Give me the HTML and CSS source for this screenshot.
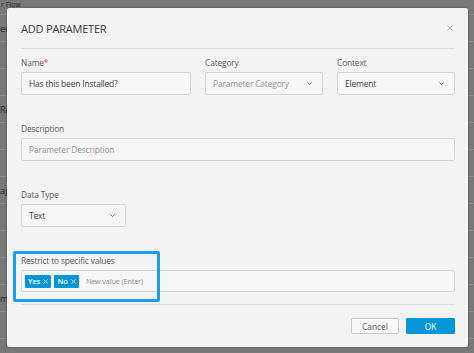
FILE: index.html
```html
<!DOCTYPE html>
<html lang="en">
<head>
<meta charset="utf-8">
<title>Add Parameter</title>
<link rel="stylesheet" href="styles.css">
</head>
<body>
<div class="backdrop">
  <div class="bg-row bg-top"><span>r Flow</span></div>
  <div class="bg-row"><span>ec</span></div>
  <div class="bg-row"></div>
  <div class="bg-row"></div>
  <div class="bg-row"><span>Ri</span></div>
  <div class="bg-row"></div>
  <div class="bg-row"></div>
  <div class="bg-row"><span>ag</span></div>
  <div class="bg-row"></div>
  <div class="bg-row"></div>
  <div class="bg-row"></div>
  <div class="bg-row"><span>m</span></div>
  <div class="bg-row"></div>
</div>

<div class="modal">
  <header class="modal-head">
    <h1 class="modal-title">ADD PARAMETER</h1>
    <span class="close" aria-label="Close">
      <svg width="6" height="6" viewBox="0 0 6 6"><path d="M0.5 0.5 L5.5 5.5 M5.5 0.5 L0.5 5.5" stroke="#b0b0b0" stroke-width="0.9" fill="none"/></svg>
    </span>
  </header>

  <div class="modal-body">
    <div class="row-three">
      <div class="field">
        <div class="label">Name<span class="req">*</span></div>
        <div class="input">Has this been Installed?</div>
      </div>
      <div class="field">
        <div class="label">Category</div>
        <div class="input select"><span class="placeholder">Parameter Category</span>
          <svg class="chev" width="5" height="3" viewBox="0 0 5 3"><path d="M0.4 0.4 L2.5 2.5 L4.6 0.4" stroke="#555" stroke-width="0.9" fill="none"/></svg>
        </div>
      </div>
      <div class="field">
        <div class="label">Context</div>
        <div class="input select"><span>Element</span>
          <svg class="chev" width="5" height="3" viewBox="0 0 5 3"><path d="M0.4 0.4 L2.5 2.5 L4.6 0.4" stroke="#555" stroke-width="0.9" fill="none"/></svg>
        </div>
      </div>
    </div>

    <div class="field">
      <div class="label">Description</div>
      <div class="input"><span class="placeholder">Parameter Description</span></div>
    </div>

    <div class="field">
      <div class="label">Data Type</div>
      <div class="input select narrow"><span>Text</span>
        <svg class="chev" width="5" height="3" viewBox="0 0 5 3"><path d="M0.4 0.4 L2.5 2.5 L4.6 0.4" stroke="#555" stroke-width="0.9" fill="none"/></svg>
      </div>
    </div>

    <div class="field">
      <div class="label">Restrict to specific values</div>
      <div class="input tags">
        <span class="tag">Yes<svg width="5" height="5" viewBox="0 0 5 5"><path d="M0.4 0.4 L4.6 4.6 M4.6 0.4 L0.4 4.6" stroke="#fff" stroke-width="0.8" fill="none"/></svg></span>
        <span class="tag">No<svg width="5" height="5" viewBox="0 0 5 5"><path d="M0.4 0.4 L4.6 4.6 M4.6 0.4 L0.4 4.6" stroke="#fff" stroke-width="0.8" fill="none"/></svg></span>
        <span class="placeholder tag-ph">New value (Enter)</span>
      </div>
    </div>
  </div>

  <footer class="modal-foot">
    <button class="btn btn-cancel">Cancel</button>
    <button class="btn btn-ok">OK</button>
  </footer>
</div>

<div class="highlight"></div>
</body>
</html>
```

FILE: styles.css
```css
* { box-sizing: border-box; }

html, body {
  margin: 0;
  padding: 0;
}

body {
  width: 474px;
  height: 353px;
  overflow: hidden;
  background: #787878;
  font-family: "Open Sans", "Noto Sans", sans-serif;
  position: relative;
}

.bg-row {
  height: 27px;
  border-bottom: 1px solid #8a8a8a;
  display: flex;
  align-items: center;
  font-size: 9px;
  color: #2e2e2e;
}

.bg-top {
  height: 15px;
  align-items: flex-start;
  font-size: 7px;
  line-height: normal;
  padding-left: 1px;
}

.modal {
  position: absolute;
  left: 7px;
  top: 8px;
  width: 461px;
  height: 339px;
  background: #f3f3f3;
  border-radius: 2px;
  box-shadow: 0 0 3px rgba(0, 0, 0, 0.35);
  padding: 0 13px 0 14px;
  display: flex;
  flex-direction: column;
}

.modal-head {
  height: 41px;
  border-bottom: 1px solid #dedede;
  display: flex;
  align-items: center;
  justify-content: space-between;
}

.modal-title {
  margin: 0;
  font-size: 11px;
  font-weight: 400;
  color: #3a3a3a;
  letter-spacing: -0.2px;
}

.close {
  display: flex;
  margin-right: 2px;
}

.modal-body {
  padding: 8px 0 12px;
  display: flex;
  flex-direction: column;
  gap: 28px;
  flex: 1;
}

.row-three {
  display: grid;
  grid-template-columns: 170px 118px 118px;
  column-gap: 14px;
}

.field {
  display: flex;
  flex-direction: column;
}

.label {
  font-size: 8.4px;
  line-height: 11px;
  height: 11px;
  color: #5a5a5a;
  margin-bottom: 4px;
  white-space: nowrap;
  letter-spacing: -0.15px;
}

.req {
  color: #e0394b;
}

.input {
  height: 23px;
  border: 1px solid #d6d6d6;
  border-radius: 2px;
  background: #f6f6f6;
  display: flex;
  align-items: center;
  padding: 0 7px;
  font-size: 8.5px;
  letter-spacing: -0.2px;
  color: #404040;
  white-space: nowrap;
}

.placeholder {
  color: #979797;
}

.select {
  justify-content: space-between;
  padding-right: 10px;
}

.chev {
  display: block;
}

.narrow {
  width: 105px;
}

.tags {
  height: 22px;
  padding-left: 3px;
  gap: 3px;
}

.tag {
  height: 13px;
  background: #0696d7;
  color: #fff;
  font-size: 7.5px;
  letter-spacing: 0;
  font-weight: 600;
  display: flex;
  align-items: center;
  gap: 3px;
  padding: 0 3px;
  border-radius: 1px;
}

.tag svg {
  display: block;
}

.tag-ph {
  font-size: 7.2px;
  letter-spacing: -0.1px;
  margin-left: 4px;
  color: #8e8e8e;
}

.modal-foot {
  border-top: 1px solid #dedede;
  padding: 13px 0;
  display: flex;
  justify-content: flex-end;
  gap: 7px;
}

.btn {
  height: 16px;
  font-family: inherit;
  font-size: 8.4px;
  border-radius: 1px;
  padding: 0;
  margin: 0;
  display: flex;
  align-items: center;
  justify-content: center;
}

.btn-cancel {
  width: 48px;
  border: 1px solid #c9c9c9;
  background: #f8f8f8;
  color: #555;
}

.btn-ok {
  width: 49px;
  border: 1px solid #0696d7;
  background: #0696d7;
  color: #fff;
}

.highlight {
  position: absolute;
  left: 13px;
  top: 251px;
  width: 147px;
  height: 51px;
  border: 3px solid #1a9cf0;
  border-radius: 2px;
}
```
